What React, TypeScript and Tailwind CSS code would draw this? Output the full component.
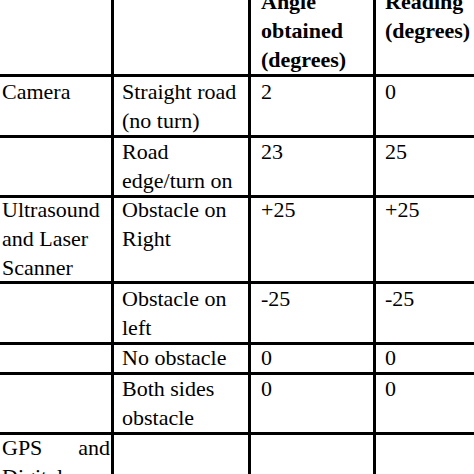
import React from "react";

type Row = {
  h: string;
  c1: string[];
  c2: string[];
  c3: string[];
  c4: string[];
  justify?: boolean;
};

const rows: Row[] = [
  { h: "h-[60px]", c1: ["Camera"], c2: ["Straight road", "(no turn)"], c3: ["2"], c4: ["0"] },
  { h: "h-[58px]", c1: [], c2: ["Road", "edge/turn on"], c3: ["23"], c4: ["25"] },
  { h: "h-[89px]", c1: ["Ultrasound", "and Laser", "Scanner"], c2: ["Obstacle on", "Right"], c3: ["+25"], c4: ["+25"] },
  { h: "h-[59px]", c1: [], c2: ["Obstacle on", "left"], c3: ["-25"], c4: ["-25"] },
  { h: "h-[31px]", c1: [], c2: ["No obstacle"], c3: ["0"], c4: ["0"] },
  { h: "h-[59px]", c1: [], c2: ["Both sides", "obstacle"], c3: ["0"], c4: ["0"] },
  { h: "h-[70px]", c1: ["GPS and", "Digital"], c2: [], c3: [], c4: [], justify: true },
];

function Lines({ lines }: { lines: string[] }) {
  return (
    <>
      {lines.map((l, i) => (
        <div key={i} className="whitespace-nowrap">
          {l}
        </div>
      ))}
    </>
  );
}

export default function App() {
  return (
    <div className="w-[474px] h-[474px] overflow-hidden bg-white text-black">
      <div
        className="-mt-[13px] -ml-[6px] w-[480px] text-[22px] leading-[29px]"
        style={{ fontFamily: '"Liberation Serif", "Times New Roman", serif' }}
      >
        {/* Header */}
        <div className="grid grid-cols-[120px_137px_125px_1fr] h-[90px] font-bold">
          <div className="border-r-[3px] border-b-[3px] border-black pl-2" />
          <div className="border-r-[3px] border-b-[3px] border-black pl-[8px]" />
          <div className="border-r-[3px] border-b-[3px] border-black pl-[10px]">
            <Lines lines={["Angle", "obtained", "(degrees)"]} />
          </div>
          <div className="border-b-[3px] border-black pl-[9px]">
            <Lines lines={["Reading", "(degrees)"]} />
          </div>
        </div>
        {rows.map((r, i) => (
          <div key={i} className={`grid grid-cols-[120px_137px_125px_1fr] ${r.h}`}>
            <div className="border-r-[3px] border-b-[3px] border-black pl-2 pr-[1px] overflow-hidden">
              {r.justify ? (
                <>
                  <div className="flex justify-between">
                    <span>GPS</span>
                    <span>and</span>
                  </div>
                  <div>Digital</div>
                </>
              ) : (
                <Lines lines={r.c1} />
              )}
            </div>
            <div className="border-r-[3px] border-b-[3px] border-black pl-[8px]">
              <Lines lines={r.c2} />
            </div>
            <div className="border-r-[3px] border-b-[3px] border-black pl-[10px]">
              <Lines lines={r.c3} />
            </div>
            <div className="border-b-[3px] border-black pl-[9px]">
              <Lines lines={r.c4} />
            </div>
          </div>
        ))}
      </div>
    </div>
  );
}
